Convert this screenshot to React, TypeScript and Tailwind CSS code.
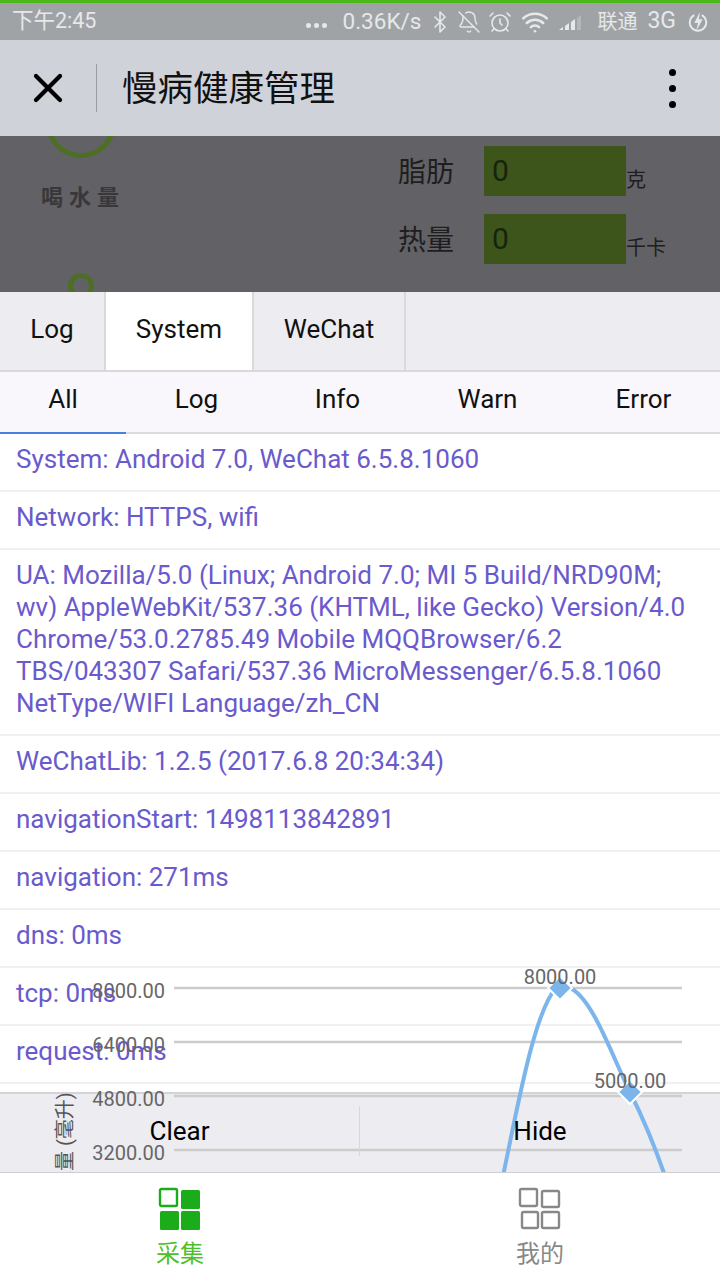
import { AlarmClock, BellOff, Bluetooth, Wifi, X } from "lucide-react";

const FONT = "font-['Roboto','Noto_Sans_CJK_SC',sans-serif]";

const rows = [
  "System: Android 7.0, WeChat 6.5.8.1060",
  "Network: HTTPS, wifi",
  "UA: Mozilla/5.0 (Linux; Android 7.0; MI 5 Build/NRD90M; wv) AppleWebKit/537.36 (KHTML, like Gecko) Version/4.0 Chrome/53.0.2785.49 Mobile MQQBrowser/6.2 TBS/043307 Safari/537.36 MicroMessenger/6.5.8.1060 NetType/WIFI Language/zh_CN",
  "WeChatLib: 1.2.5 (2017.6.8 20:34:34)",
  "navigationStart: 1498113842891",
  "navigation: 271ms",
  "dns: 0ms",
  "tcp: 0ms",
  "request: 0ms",
  "response: 0ms",
];

function StatusBar() {
  return (
    <div className="h-[40px] border-t-[3px] border-[#4cb81c] bg-[#a0a3a6] text-[#e6e8ea] flex items-center pl-[12px] pr-[11px] text-[21.5px]">
      <span>下午2:45</span>
      <span className="ml-auto flex gap-[3px] mt-[8px] mr-[16px]">
        <i className="w-[5px] h-[5px] rounded-full bg-[#e6e8ea]" />
        <i className="w-[5px] h-[5px] rounded-full bg-[#e6e8ea]" />
        <i className="w-[5px] h-[5px] rounded-full bg-[#e6e8ea]" />
      </span>
      <span className="text-[22.5px]">0.36K/s</span>
      <Bluetooth size={24} strokeWidth={1.6} className="ml-[7px]" />
      <BellOff size={24} strokeWidth={1.4} className="ml-[5px]" />
      <AlarmClock size={24} strokeWidth={1.6} className="ml-[7px]" />
      <Wifi size={28} strokeWidth={2.2} className="ml-[9px]" />
      <svg width="28" height="18" viewBox="0 0 26 18" className="ml-[8px]">
        <path d="M1 17h4v-3zM7 17h4v-7l-4 3zM13 17h4V6l-4 3z" fill="#e6e8ea" />
        <path d="M19 17h4V2l-4 3z" fill="#b4b7ba" />
      </svg>
      <span className="ml-[12px] text-[20px]">联通</span>
      <span className="ml-[10px] text-[23px]">3G</span>
      <svg width="22" height="22" viewBox="0 0 24 24" className="ml-[11px]">
        <path d="M8 4.5a9 9 0 1 0 8 0" fill="none" stroke="#e6e8ea" strokeWidth="2" />
        <path d="M14 1l-6 12h4l-2 9 7-13h-4z" fill="#e6e8ea" />
      </svg>
    </div>
  );
}

function Header() {
  return (
    <div className="h-[96px] bg-[#cfd3d9] flex items-center relative">
      <X size={48} strokeWidth={2.1} className="ml-[24px] text-black" />
      <div className="w-px h-[48px] bg-[#9a9da1] ml-[24px]" />
      <h1 className="ml-[25px] mt-[4px] text-[35.5px] font-normal text-[#111]">慢病健康管理</h1>
      <div className="ml-auto mr-[44px] flex flex-col gap-[9px]">
        <i className="w-[7px] h-[7px] rounded-full bg-black" />
        <i className="w-[7px] h-[7px] rounded-full bg-black" />
        <i className="w-[7px] h-[7px] rounded-full bg-black" />
      </div>
    </div>
  );
}

function Field({ label, unit }: { label: string; unit: string }) {
  return (
    <div className="flex items-center h-[50px]">
      <span className="w-[86px] text-[28px] text-[#1e1e20] mt-[4px]">{label}</span>
      <div className="w-[142px] h-[50px] bg-[#3d551b] text-[#17240c] text-[30px] leading-[50px] pl-[8px]">0</div>
      <span className="self-end text-[20px] leading-[24px] text-[#1e1e20] mb-[4px]">{unit}</span>
    </div>
  );
}

function DimmedPage() {
  return (
    <div className="h-[156px] bg-[#626165] flex overflow-hidden">
      <div className="w-[162px] flex flex-col items-center">
        <div className="w-[70px] h-[70px] rounded-full border-[5px] border-[#4d6f24] mt-[-48px] shrink-0" />
        <div className="mt-[22px] text-[22px] font-bold tracking-[6px] text-[#38383a] pl-[4px] leading-[36px]">喝水量</div>
        <div className="w-[26px] h-[26px] rounded-full border-[5px] border-[#4d6f24] mt-[57px] shrink-0" />
      </div>
      <div className="ml-[236px] pt-[10px] flex flex-col gap-[18px]">
        <Field label="脂肪" unit="克" />
        <Field label="热量" unit="千卡" />
      </div>
    </div>
  );
}

function Chart() {
  return (
    <svg width="720" height="300" viewBox="0 960 720 300" className="absolute left-0 top-[960px] z-10 pointer-events-none">
      <path d="M174 988H682M174 1042H682M174 1096H682M174 1150H682" stroke="#cccccc" strokeWidth="2.5" />
      <g fontFamily="Roboto" fontSize="20" fill="#666666" textAnchor="end">
        <text x="165" y="998">8000.00</text>
        <text x="165" y="1052">6400.00</text>
        <text x="165" y="1106">4800.00</text>
        <text x="165" y="1160">3200.00</text>
      </g>
      <text transform="translate(72 1191) rotate(-90)" fontFamily="Roboto, 'Noto Sans CJK SC'" fontSize="20" fill="#555555">
        水量 (毫升)
      </text>
      <path
        d="M503 1176C517 1110 534 1012 556 988C562 985 566 985 572 989C594 1002 612 1056 630 1092C642 1116 654 1144 665 1176"
        fill="none"
        stroke="#7cb5ec"
        strokeWidth="4"
      />
      <path d="M560 976l12 12-12 12-12-12z" fill="#7cb5ec" stroke="#fff" strokeWidth="2" />
      <path d="M630 1080l12 12-12 12-12-12z" fill="#7cb5ec" stroke="#fff" strokeWidth="2" />
      <g fontFamily="Roboto" fontSize="20" fill="#666666" textAnchor="middle">
        <text x="560" y="984">8000.00</text>
        <text x="630" y="1088">5000.00</text>
      </g>
    </svg>
  );
}

function Console() {
  return (
    <div className="h-[880px] relative overflow-hidden flex flex-col bg-white">
      <div className="h-[80px] shrink-0 flex bg-[#edecf1] border-b-2 border-[#d9d9d9] text-[26px] text-[#111]">
        <div className="w-[106px] border-r-2 border-[#d9d9d9] flex items-center justify-center pb-[3px]">Log</div>
        <div className="w-[148px] border-r-2 border-[#d9d9d9] bg-white flex items-center justify-center pb-[3px]">System</div>
        <div className="w-[152px] border-r-2 border-[#d9d9d9] flex items-center justify-center pb-[3px]">WeChat</div>
      </div>
      <div className="h-[62px] shrink-0 grid grid-cols-[126px_141px_141px_159px_153px] bg-[#f9f7fc] border-b-2 border-[#dcdcdc] text-[26px] text-[#111]">
        <div className="relative flex items-center justify-center pb-[5px]">
          All
          <div className="absolute left-0 right-0 bottom-[-2px] h-[2px] bg-[#4a7fdc]" />
        </div>
        <div className="flex items-center justify-center pb-[5px]">Log</div>
        <div className="flex items-center justify-center pb-[5px]">Info</div>
        <div className="flex items-center justify-center pb-[5px]">Warn</div>
        <div className="flex items-center justify-center pb-[5px]">Error</div>
      </div>
      <div className="text-[26px] leading-[32px] text-[#6a5acd]">
        {rows.map((r) => (
          <div key={r} className="px-[16px] pt-[9px] pb-[15px] border-b-2 border-[#f0f0f0] break-words">
            {r}
          </div>
        ))}
      </div>
    </div>
  );
}

function TabIcon({ active }: { active: boolean }) {
  const c = active ? "#1aad19" : "#888888";
  return (
    <svg width="44" height="44" viewBox="0 0 44 44">
      <rect x="2" y="2" width="17" height="17" rx="1.5" fill="none" stroke={c} strokeWidth="2.4" />
      {active ? (
        <g fill={c}>
          <rect x="23" y="3" width="19" height="19" rx="1.5" />
          <rect x="2" y="24" width="19" height="19" rx="1.5" />
          <rect x="23" y="24" width="19" height="19" rx="1.5" />
        </g>
      ) : (
        <g fill="none" stroke={c} strokeWidth="2.4">
          <rect x="24" y="4" width="17" height="16" rx="1.5" />
          <rect x="4" y="25" width="16" height="16" rx="1.5" />
          <rect x="24" y="25" width="17" height="16" rx="1.5" />
        </g>
      )}
    </svg>
  );
}

export default function App() {
  return (
    <div className={`${FONT} relative w-[720px] h-[1280px] overflow-hidden bg-white`}>
      <StatusBar />
      <Header />
      <DimmedPage />
      <Console />

      {/* vConsole footer sits under the chart, its labels above */}
      <div className="absolute left-0 right-0 top-[1092px] h-[80px] bg-[#edecf1] border-t-2 border-[#d4d4d6]" />
      <Chart />
      <div className="absolute left-0 right-0 top-[1092px] h-[80px] z-20 flex items-center text-[26px] text-black pb-[2px]">
        <div className="w-[359px] text-center">Clear</div>
        <div className="w-px h-[50px] bg-[#d8d8da]" />
        <div className="flex-1 text-center">Hide</div>
      </div>

      <div className="absolute left-0 right-0 bottom-0 h-[108px] z-30 bg-white border-t border-[#cfcfcf] grid grid-cols-2">
        <div className="flex flex-col items-center pt-[14px]">
          <TabIcon active />
          <span className="text-[24px] leading-[32px] mt-[7px] text-[#4dbf2b]">采集</span>
        </div>
        <div className="flex flex-col items-center pt-[14px]">
          <TabIcon active={false} />
          <span className="text-[24px] leading-[32px] mt-[7px] text-[#888888]">我的</span>
        </div>
      </div>
    </div>
  );
}
